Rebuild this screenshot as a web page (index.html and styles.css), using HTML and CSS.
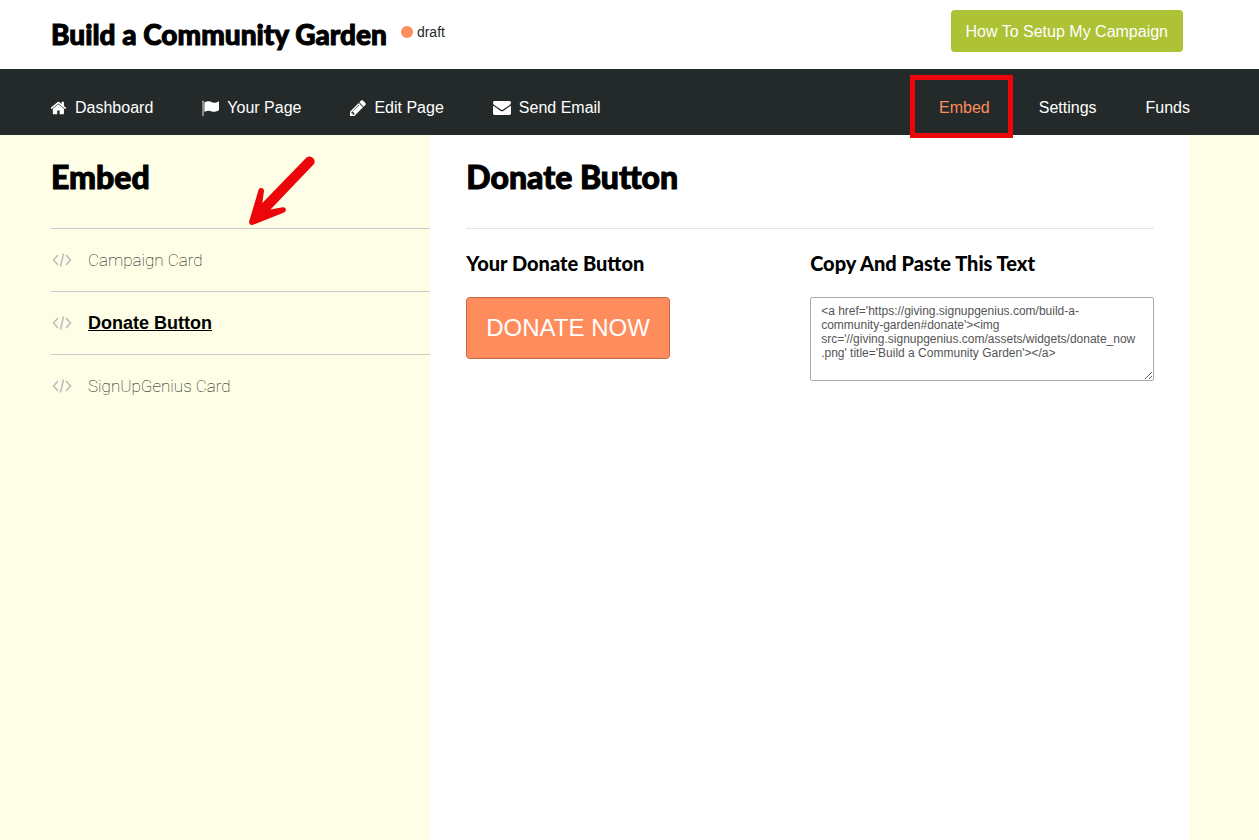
FILE: index.html
```
<!DOCTYPE html>
<html lang="en">
<head>
    <meta charset="UTF-8">
    <meta name="viewport" content="width=device-width, initial-scale=1.0">
    <title>Build a Community Garden - Embed</title>
    <link rel="stylesheet" href="styles.css">
</head>
<body>
    <header class="header">
        <div class="campaign">
            <h1>Build a Community Garden</h1>
            <span class="campaign-status"><span class="dot"></span>draft</span>
        </div>
        <button type="button" class="btn-help">How To Setup My Campaign</button>
    </header>

    <nav class="nav">
        <ul class="nav-list">
            <li><a href="#">
                <svg class="icon-home" viewBox="64 160 1664 1472"><path d="M1408 992v480q0 26-19 45t-45 19h-384v-384h-256v384h-384q-26 0-45-19t-19-45v-480q0-1 .5-3t.5-3l575-474 575 474q1 2 1 6zm223-69l-62 74q-8 9-21 11h-3q-13 0-21-7l-692-577-692 577q-12 8-24 7-13-2-21-11l-62-74q-8-10-7-23.5t11-21.5l719-599q32-26 76-26t76 26l244 204v-195q0-14 9-23t23-9h192q14 0 23 9t9 23v408l219 182q10 8 11 21.5t-7 23.5z"/></svg>
                Dashboard</a></li>
            <li><a href="#">
                <svg class="icon-flag" viewBox="0 0 18 17"><path class="pole" d="M.3 2.200a1 1 0 1 1 1.600 0V17H.3z"/><path d="M2.500 2.600C5.500.9 8 1.100 10.500 2.400c2.300 1 4.500.3 7.500-1.200V11c-2.900 1.500-5.300 2.100-7.600 1.100C8 11 5.500 11.100 2.500 12.700z"/></svg>
                Your Page</a></li>
            <li><a href="#">
                <svg class="icon-pencil" viewBox="128 128 1536 1536"><path d="M491 1536l91-91-235-235-91 91v107h128v128h107zm523-928q0-22-22-22-10 0-17 7l-542 542q-7 7-7 17 0 22 22 22 10 0 17-7l542-542q7-7 7-17zm-54-192l416 416-832 832h-416v-416zm683 96q0 53-37 90l-166 166-416-416 166-165q36-38 90-38 53 0 91 38l235 234q37 39 37 91z"/></svg>
                Edit Page</a></li>
            <li><a href="#">
                <svg class="icon-mail" viewBox="0 192 1792 1536"><path d="M1792 710v794q0 66-47 113t-113 47h-1472q-66 0-113-47t-47-113v-794q44 49 101 87 362 246 497 345 57 42 92.500 65.500t94.500 48 110 24.500h2q51 0 110-24.500t94.500-48 92.500-65.500q170-123 498-345 57-39 100-87zm0-294q0 79-49 151t-122 123q-376 261-468 325-10 7-42.500 31t-54 38.500-52 32.500-57.500 27-50 9h-2q-23 0-50-9t-57.500-27-52-32.500-54-38.500-42.500-31q-91-64-262-182.500t-205-142.500q-62-42-117-115.500t-55-136.500q0-78 41.500-130t118.500-52h1472q65 0 112.500 47t47.500 113z"/></svg>
                Send Email</a></li>
        </ul>
        <ul class="nav-list">
            <li class="highlighted"><a href="#" class="active">Embed</a></li>
            <li><a href="#">Settings</a></li>
            <li><a href="#">Funds</a></li>
        </ul>
    </nav>

    <div class="page">
        <aside class="sidebar">
            <h2>Embed</h2>
            <ul class="side-list">
                <li><a href="#">
                    <svg viewBox="0 0 20 16"><path d="M6 3L1.500 8L6 13M14 3l4.500 5L14 13M11.500 1.500l-3 13"/></svg>
                    Campaign Card</a></li>
                <li><a href="#" class="current">
                    <svg viewBox="0 0 20 16"><path d="M6 3L1.500 8L6 13M14 3l4.500 5L14 13M11.500 1.500l-3 13"/></svg>
                    <span>Donate Button</span></a></li>
                <li><a href="#">
                    <svg viewBox="0 0 20 16"><path d="M6 3L1.500 8L6 13M14 3l4.500 5L14 13M11.500 1.500l-3 13"/></svg>
                    SignUpGenius Card</a></li>
            </ul>
            <svg class="arrow" viewBox="0 0 66 69"><path d="M57.500 1.600a5 5 0 0 1 7 7L21.500 53.500l12.300-2.300c3.500-.3 4.300 4 1.300 5.200L4 68.800c-2.500.8-4.500-1.200-3.800-3.500L9.500 34c1-3.200 5.700-2.400 5.500 1L13.300 47z"/></svg>
        </aside>

        <main class="main">
            <h2>Donate Button</h2>
            <div class="columns">
                <section>
                    <h3>Your Donate Button</h3>
                    <button type="button" class="btn-donate">DONATE NOW</button>
                </section>
                <section>
                    <h3><label for="embedCode">Copy And Paste This Text</label></h3>
                    <textarea id="embedCode" class="embed-code" spellcheck="false">&lt;a href='https://giving.signupgenius.com/build-a-community-garden#donate'&gt;&lt;img src='//giving.signupgenius.com/assets/widgets/donate_now.png' title='Build a Community Garden'&gt;&lt;/a&gt;</textarea>
                </section>
            </div>
        </main>
    </div>
</body>
</html>
```
FILE: styles.css
```
* {
    box-sizing: border-box;
}
body {
    margin: 0;
    min-height: 100vh;
    display: flex;
    flex-direction: column;
    font-family: "Liberation Sans", Arial, sans-serif;
    font-size: 16px;
    color: #000;
    background: #fefee6;
}
h1, h2, h3 {
    margin: 0;
    font-family: Lato, sans-serif;
    font-weight: 900;
}
h1, h2 {
    -webkit-text-stroke: 1px #000;
}
ul {
    margin: 0;
    padding: 0;
    list-style: none;
}
a {
    color: inherit;
    text-decoration: none;
}

/* Header */
.header {
    display: flex;
    justify-content: space-between;
    align-items: flex-start;
    padding: 10px 76px 17px 51px;
    background: #fff;
}
.campaign {
    display: flex;
    gap: 14px;
    padding-top: 7px;
}
h1 {
    font-size: 28px;
    line-height: 34px;
}
.campaign-status {
    display: flex;
    align-items: center;
    gap: 4px;
    height: 30px;
    font-size: 14px;
    color: #242a2a;
}
.dot {
    width: 12px;
    height: 12px;
    border-radius: 50%;
    background: #ff8c5c;
}
.btn-help {
    height: 42px;
    padding: 2px 15px 0;
    border: none;
    border-radius: 4px;
    background: #adc235;
    color: #fff;
    font: inherit;
    cursor: pointer;
}

/* Navigation */
.nav {
    display: flex;
    justify-content: space-between;
    padding: 29px 69px 17px 51px;
    background: #242a2a;
    color: #fff;
    line-height: 20px;
}
.nav-list {
    display: flex;
    gap: 49px;
}
.nav-list a {
    display: flex;
    align-items: center;
    gap: 8px;
}
.nav-list svg {
    fill: #fff;
    height: 16px;
}
.icon-home { width: 16px; }
.icon-flag { width: 17px; }
.icon-flag .pole { fill: #a7aaaa; }
.icon-pencil { width: 16px; }
.icon-mail { width: 18px; }
.nav-list .active { color: #ff8c5c; }
.highlighted { position: relative; }
.highlighted::after {
    content: "";
    position: absolute;
    top: -23px;
    bottom: -20px;
    left: -29px;
    right: -23px;
    border: 5px solid #ec0609;
    pointer-events: none;
}

/* Page */
.page {
    flex: 1;
    display: grid;
    grid-template-columns: 33.3% 1fr;
    padding: 0 69px 0 51px;
}
h2 {
    font-size: 32px;
    line-height: 38px;
    padding: 23px 0 32px;
}
.sidebar { position: relative; }
.side-list li { border-top: 1px solid #ccc; }
.side-list a {
    display: flex;
    align-items: center;
    gap: 16px;
    height: 62px;
    font-family: Roboto, sans-serif;
    font-size: 17px;
    font-weight: 100;
}
.side-list svg {
    width: 20px;
    height: 16px;
    margin-left: 1px;
    fill: none;
    stroke: #bbb;
    stroke-width: 1.5;
}
.side-list .current {
    font-family: "Liberation Sans", Arial, sans-serif;
    font-size: 18px;
    font-weight: bold;
    text-decoration: underline;
}
.arrow {
    position: absolute;
    top: 21px;
    left: 198px;
    width: 66px;
    height: 69px;
    fill: #ec0609;
}
.main {
    padding: 0 36px;
    background: #fff;
}
.columns {
    display: grid;
    grid-template-columns: 1fr 1fr;
    padding-top: 21px;
    border-top: 1px solid #e6e6e6;
}
h3 {
    font-size: 20px;
    line-height: 26px;
    margin-bottom: 21px;
}
.btn-donate {
    padding: 16px 19px;
    border: 1px solid #c2693f;
    border-radius: 4px;
    background: #ff8c5c;
    color: #fff;
    font-family: inherit;
    font-size: 24px;
    line-height: 28px;
    cursor: pointer;
}
.embed-code {
    display: block;
    width: 100%;
    height: 84px;
    padding: 6px 17px 6px 10px;
    border: 1px solid #aaa;
    border-radius: 2px;
    background: #fff;
    color: #555;
    font-family: inherit;
    font-size: 12px;
    line-height: 14px;
    overflow: hidden;
    overflow-wrap: break-word;
}
```
